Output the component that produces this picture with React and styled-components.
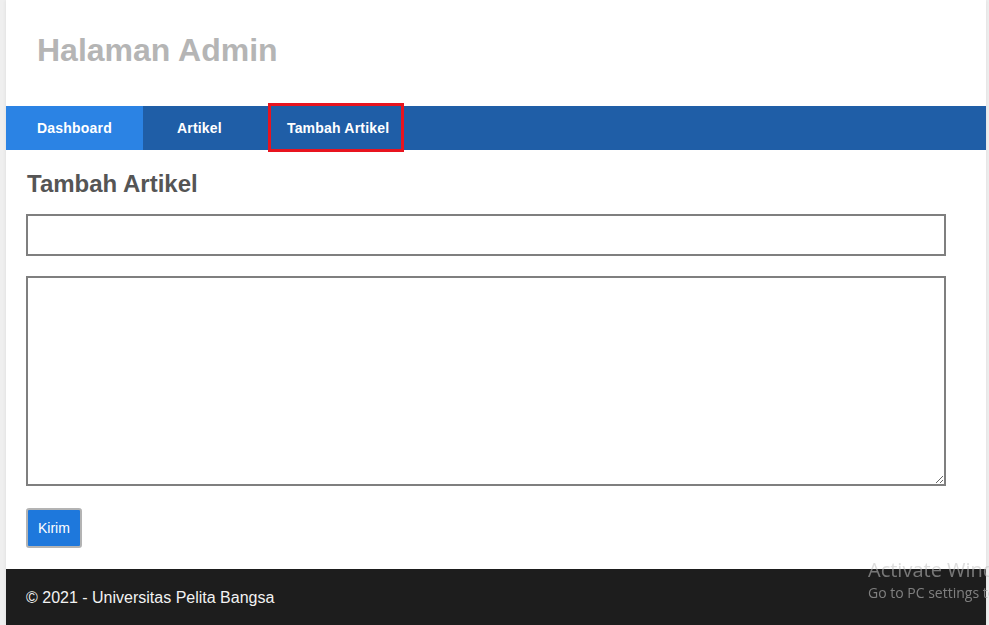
import React from 'react';
import styled, { createGlobalStyle } from 'styled-components';

const GlobalStyle = createGlobalStyle`
  html, body {
    margin: 0;
    padding: 0;
    background: #efefef;
    font-family: "Liberation Sans", Arial, sans-serif;
  }
`;

const Container = styled.div`
  width: 980px;
  margin-left: 6px;
  background: #fff;
  box-shadow: 0 0 4px rgba(0, 0, 0, 0.08);
`;

const Header = styled.header`
  height: 106px;
  box-sizing: border-box;
  padding: 32px 31px 0;
`;

const SiteTitle = styled.h1`
  margin: 0;
  font-size: 32px;
  font-weight: bold;
  color: #b5b5b5;
`;

const Nav = styled.nav`
  display: flex;
  gap: 3px;
  height: 44px;
  background: #1f5ea7;
`;

const Tab = styled.a`
  position: relative;
  display: flex;
  align-items: center;
  padding: 0 31px;
  font-size: 14px;
  font-weight: bold;
  letter-spacing: 0.2px;
  color: #fff;
  text-decoration: none;
  background: ${({ $active }) => ($active ? '#2b83e4' : 'transparent')};

  ${({ $marked }) =>
    $marked &&
    `
    &::after {
      content: '';
      position: absolute;
      left: 12px;
      right: 16px;
      top: -3px;
      bottom: -2px;
      border: 3px solid #e8141f;
    }
  `}
`;

const Main = styled.main`
  padding: 20px 40px 21px 20px;
`;

const PageTitle = styled.h2`
  margin: 0 0 16px 1px;
  font-size: 24px;
  font-weight: bold;
  color: #555;
`;

const Form = styled.form`
  display: flex;
  flex-direction: column;
  align-items: flex-start;
`;

const TextInput = styled.input`
  display: block;
  width: 100%;
  height: 42px;
  box-sizing: border-box;
  border: 2px solid #7f7f7f;
  margin: 0 0 20px;
  padding: 0 8px;
  font: 14px "Liberation Sans", Arial, sans-serif;
  outline: none;
`;

const TextArea = styled.textarea`
  display: block;
  width: 100%;
  height: 210px;
  box-sizing: border-box;
  border: 2px solid #7f7f7f;
  margin: 0 0 22px;
  padding: 8px;
  font: 14px "Liberation Sans", Arial, sans-serif;
  outline: none;
`;

const SubmitButton = styled.button`
  height: 40px;
  padding: 0 10px;
  border: 2px solid #b3b3b3;
  border-radius: 3px;
  background: #1e78dc;
  color: #fff;
  font: 14px "Liberation Sans", Arial, sans-serif;
  cursor: pointer;
`;

const Footer = styled.footer`
  background: #1d1d1d;
  color: #f2f2f2;
  padding: 20px;
  font-size: 16px;
  height: 56px;
  box-sizing: border-box;
`;

const Watermark = styled.div`
  position: fixed;
  left: 868px;
  top: 557px;
  white-space: nowrap;
  font-family: "Open Sans", "Noto Sans", sans-serif;
  color: rgba(193, 193, 193, 0.55);
  pointer-events: none;
`;

const WatermarkTitle = styled.div`
  font-size: 20px;
  line-height: 26px;
`;

const WatermarkNote = styled.div`
  font-size: 14px;
  line-height: 20px;
  color: rgba(160, 160, 160, 0.75);
`;

export default function App() {
  return (
    <>
      <GlobalStyle />
      <Container>
        <Header>
          <SiteTitle>Halaman Admin</SiteTitle>
        </Header>
        <Nav>
          <Tab href="#" $active>Dashboard</Tab>
          <Tab href="#">Artikel</Tab>
          <Tab href="#" $marked>Tambah Artikel</Tab>
        </Nav>
        <Main>
          <PageTitle>Tambah Artikel</PageTitle>
          <Form onSubmit={(e) => e.preventDefault()}>
            <TextInput type="text" name="judul" />
            <TextArea name="isi" />
            <SubmitButton type="submit">Kirim</SubmitButton>
          </Form>
        </Main>
        <Footer>&copy; 2021 - Universitas Pelita Bangsa</Footer>
      </Container>
      <Watermark>
        <WatermarkTitle>Activate Windows</WatermarkTitle>
        <WatermarkNote>Go to PC settings to activate Windows.</WatermarkNote>
      </Watermark>
    </>
  );
}
